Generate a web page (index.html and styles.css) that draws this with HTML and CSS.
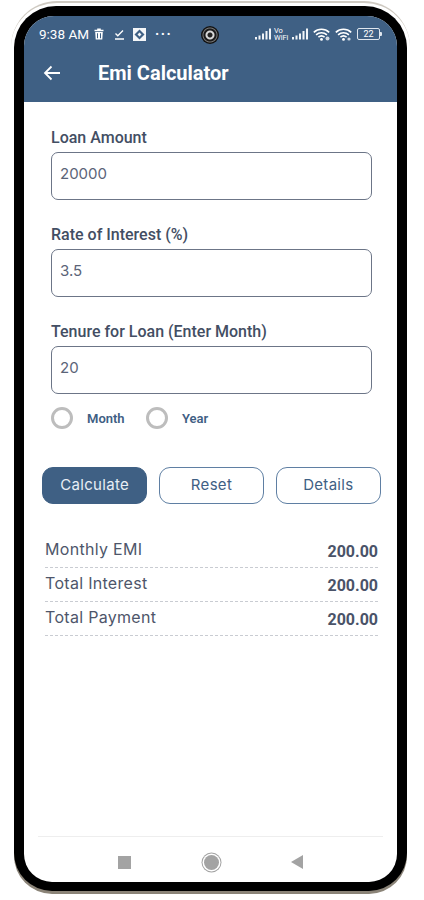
FILE: index.html
```html
<!DOCTYPE html>
<html lang="en">
<head>
<meta charset="utf-8">
<title>Emi Calculator</title>
<link rel="stylesheet" href="styles.css">
</head>
<body>
<div class="phone">
  <div class="screen">
    <header class="header">
      <div class="status">
        <div class="status-left">
          <span class="time">9:38 AM</span>
          <svg class="icon-trash" width="10" height="12" viewBox="0 0 10 12"><path d="M3.200.5h3.600v1.200h2.700v1.500H.5V1.700h2.700zM1.200 4h7.600l-.5 7.500H1.700zM3 5.200v5h1v-5zm3 0v5h1v-5z" fill="#fff"/></svg>
          <svg class="icon-check" width="11" height="11" viewBox="0 0 11 11"><path d="M1.500 4.500l2.300 2.300L9 1.500" fill="none" stroke="#fff" stroke-width="1.300"/><path d="M1 10h9" stroke="#fff" stroke-width="1.400"/></svg>
          <svg class="icon-grid" width="13" height="13" viewBox="0 0 13 13"><path d="M0 0h13v13H0z" fill="#f4f6f8"/><path d="M6.500 1.500l5 5-5 5-5-5z" fill="#3f6084"/><path d="M6.500 4.500l2 2-2 2-2-2z" fill="#f4f6f8"/></svg>
          <span class="dots">···</span>
        </div>
        <div class="status-right">
          <svg class="icon-signal" width="16" height="12" viewBox="0 0 16 12"><path d="M0 9h2v2.500H0zM3.500 7.500h2v4h-2zM7 5.500h2v6H7zM10.500 3h2v8.500h-2zM14 .5h2v11h-2z" fill="#f2f5f8"/></svg>
          <span class="vowifi">Vo<br>WiFi</span>
          <svg class="icon-signal" width="16" height="12" viewBox="0 0 16 12"><path d="M0 9h2v2.500H0zM3.500 7.500h2v4h-2zM7 5.500h2v6H7zM10.500 3h2v8.500h-2zM14 .5h2v11h-2z" fill="#f2f5f8"/></svg>
          <svg class="icon-wifi" width="17" height="13" viewBox="0 0 17 13"><path d="M.8 4.300c4.300-4 11.100-4 15.400 0M3.100 6.800c3-2.700 7.800-2.700 10.800 0M5.400 9.200c1.800-1.500 4.400-1.500 6.200 0" fill="none" stroke="#fff" stroke-width="1.600"/><circle cx="8.500" cy="11.400" r="1.400" fill="#fff"/><circle cx="14.500" cy="10.500" r="2" fill="#cfd8e2"/></svg>
          <svg class="icon-wifi" width="17" height="13" viewBox="0 0 17 13"><path d="M.8 4.300c4.300-4 11.100-4 15.400 0M3.100 6.800c3-2.700 7.800-2.700 10.800 0M5.400 9.200c1.800-1.500 4.400-1.500 6.200 0" fill="none" stroke="#fff" stroke-width="1.600"/><circle cx="8.500" cy="11.400" r="1.400" fill="#fff"/><circle cx="14" cy="11" r="1.600" fill="#cfd8e2"/></svg>
          <span class="battery">22</span>
        </div>
      </div>
      <div class="appbar">
        <svg class="back" width="18" height="16" viewBox="0 0 18 16"><path d="M17 8H2M8.500 1.500L2 8l6.500 6.500" fill="none" stroke="#fff" stroke-width="1.800"/></svg>
        <h1 class="title">Emi Calculator</h1>
      </div>
    </header>

    <main class="content">
      <form class="fields">
        <div class="field">
          <label class="label">Loan Amount</label>
          <div class="input">20000</div>
        </div>
        <div class="field">
          <label class="label">Rate of Interest (%)</label>
          <div class="input">3.5</div>
        </div>
        <div class="field">
          <label class="label">Tenure for Loan (Enter Month)</label>
          <div class="input">20</div>
        </div>
      </form>
      <div class="radios">
        <span class="radio"></span><span class="radio-label">Month</span>
        <span class="radio"></span><span class="radio-label">Year</span>
      </div>
      <div class="buttons">
        <div class="btn btn-primary">Calculate</div>
        <div class="btn">Reset</div>
        <div class="btn">Details</div>
      </div>
      <div class="results">
        <div class="row"><span class="row-name">Monthly EMI</span><span class="row-value">200.00</span></div>
        <div class="row"><span class="row-name">Total Interest</span><span class="row-value">200.00</span></div>
        <div class="row"><span class="row-name">Total Payment</span><span class="row-value">200.00</span></div>
      </div>
    </main>

    <nav class="navbar">
      <span class="nav-square"></span>
      <span class="nav-circle"></span>
      <span class="nav-back"></span>
    </nav>
  </div>
  <div class="camera"></div>
</div>
</body>
</html>
```
FILE: styles.css
```css
* { box-sizing: border-box; }
html, body { margin: 0; padding: 0; background: #fff; }
body { width: 424px; height: 900px; overflow: hidden; font-family: Roboto, "Liberation Sans", sans-serif; }

.phone {
  position: relative;
  width: 393px;
  height: 885px;
  margin: 6px 0 0 14px;
  padding: 10px 10px 9px;
  background: #000;
  border-radius: 42px 42px 38px 38px;
  box-shadow: 0 3px 0 #8b8478;
}
.phone::before {
  content: "";
  position: absolute;
  left: -3px;
  right: -3px;
  top: -5px;
  height: 60px;
  border-top: 2px solid #cfcac2;
  border-radius: 46px 46px 0 0;
}
.screen {
  height: 100%;
  background: #fff;
  border-radius: 30px 30px 28px 28px;
  overflow: hidden;
  display: flex;
  flex-direction: column;
}
.camera {
  position: absolute;
  left: 187px;
  top: 20px;
  width: 18px;
  height: 18px;
  border-radius: 50%;
  background: radial-gradient(circle at 50% 50%, #222 0 2px, #d8d8d8 3px 4px, #1a1a1a 5px 6px, #777 7px, #111 8px);
}

.header { height: 86px; background: #3f6084; color: #fff; flex: none; }
.status {
  height: 28px;
  padding: 0 15px;
  display: flex;
  justify-content: space-between;
  align-items: flex-end;
}
.status-left, .status-right { display: flex; align-items: center; height: 20px; }
.time { font-size: 13.500px; line-height: 20px; margin-right: 5px; }
.icon-check { margin-left: 10px; }
.icon-grid { margin-left: 8px; }
.dots { font-size: 14px; font-weight: 700; letter-spacing: 1.500px; margin-left: 9px; }
.status-right { gap: 3px; }
.vowifi { font-size: 7.500px; line-height: 7.500px; width: 15px; }
.icon-wifi { margin-left: 2px; }
.battery {
  position: relative;
  width: 23px;
  height: 12px;
  margin: 0 2px;
  border: 1px solid #dfe6ee;
  border-radius: 2px;
  font-size: 9px;
  line-height: 10px;
  text-align: center;
}
.battery::after {
  content: "";
  position: absolute;
  right: -3px;
  top: 3px;
  width: 2px;
  height: 4px;
  background: #dfe6ee;
  border-radius: 0 1px 1px 0;
}
.appbar { height: 58px; display: flex; align-items: center; padding: 0 0 1px 19px; }
.back { flex: none; }
.title { margin: 0 0 0 37px; font-size: 20px; font-weight: 700; line-height: 24px; }

.content { flex: 1; padding: 26px 18px 0; }
.fields { padding: 0 7px 0 9px; display: flex; flex-direction: column; gap: 25px; }
.label { display: block; height: 24px; font-size: 16px; font-weight: 500; line-height: 19px; color: #434e63; }
.input {
  height: 48px;
  border: 1.500px solid #6c7587;
  border-radius: 7px;
  padding: 0 8px;
  font-family: Inter, sans-serif;
  font-size: 15px;
  line-height: 42px;
  color: #5b6478;
}
.radios { display: flex; align-items: center; margin: 12px 0 0 9px; height: 24px; }
.radio { width: 22px; height: 22px; border: 3px solid #bdbdbd; border-radius: 50%; flex: none; }
.radio-label { font-size: 13px; font-weight: 600; color: #3f6084; margin: 0 21px 0 14px; width: 38px; }
.radio-label:last-child { margin-right: 0; }

.buttons { display: flex; gap: 11.500px; margin: 37px -2px 0 0; }
.btn {
  width: 105.500px;
  height: 37px;
  border: 1.500px solid #5f7fa3;
  border-radius: 11px;
  font-family: Inter, sans-serif;
  font-size: 15px;
  letter-spacing: 0.300px;
  line-height: 33px;
  text-align: center;
  color: #3f6084;
}
.btn-primary { background: #3f6084; border-color: #3f6084; color: #e8eef5; }

.results { margin: 30px 0 0 3px; width: 333px; }
.row {
  height: 34px;
  border-bottom: 1px dashed #c9ccd2;
  display: flex;
  justify-content: space-between;
  padding-top: 5px;
}
.row-name { font-family: Inter, sans-serif; font-size: 16px; letter-spacing: 0.300px; line-height: 20px; color: #4e566a; }
.row-value { font-size: 16px; font-weight: 700; line-height: 25px; color: #4a5368; }

.navbar {
  flex: none;
  height: 46px;
  margin: 0 14px;
  border-top: 1px solid #eee;
  display: flex;
  align-items: center;
  justify-content: space-between;
  padding: 5px 80px 0 80px;
}
.nav-square { width: 13px; height: 13px; background: #a3a3a3; }
.nav-circle { width: 15px; height: 15px; border-radius: 50%; background: #a3a3a3; box-shadow: 0 0 0 1.500px #fff, 0 0 0 2.500px #a3a3a3; }
.nav-back { width: 0; height: 0; border-style: solid; border-width: 7.500px 12px 7.500px 0; border-color: transparent #a3a3a3 transparent transparent; }
```
